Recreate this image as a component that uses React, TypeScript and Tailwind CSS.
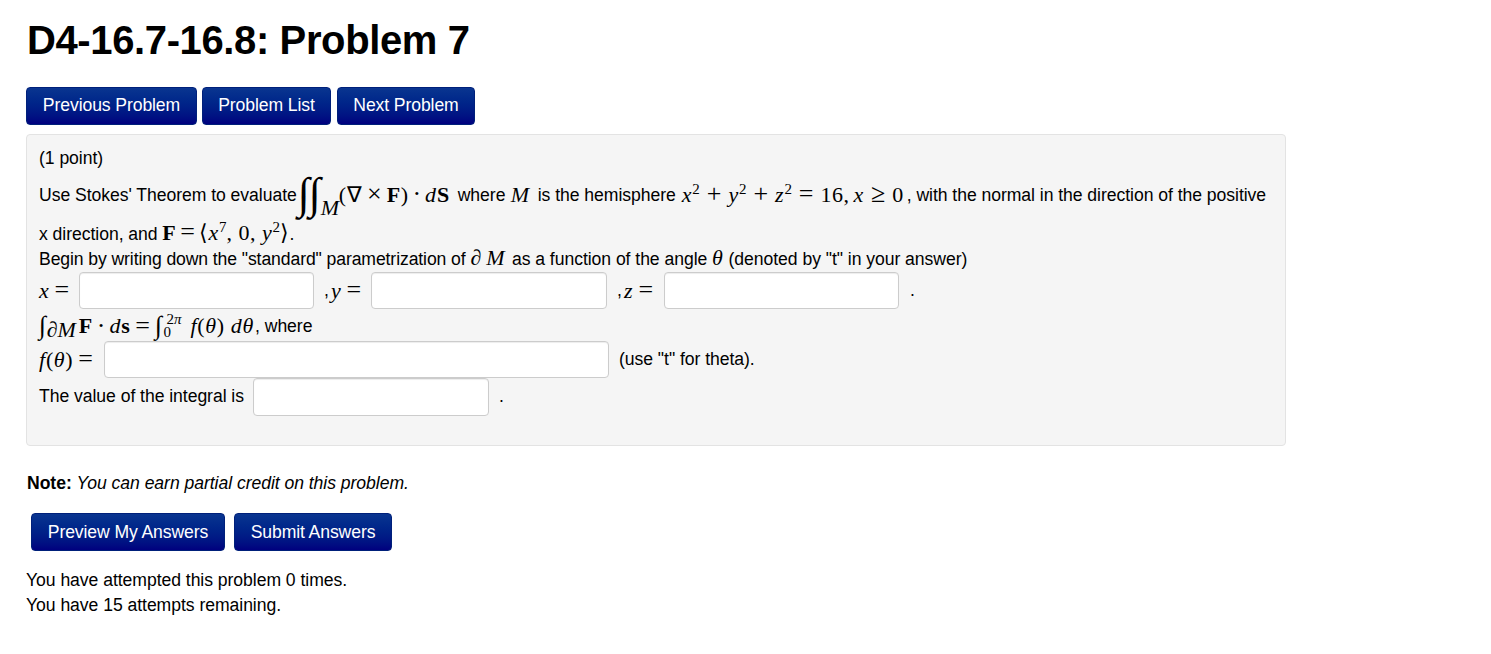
import React from "react";

const btn = "h-[38px] rounded-[4px] border border-[#00207a] bg-gradient-to-b from-[#0a3590] to-[#00007f] text-[17.6px] tracking-[-0.1px] text-white";
const field = "h-[37px] rounded-[4px] border border-[#cccccc] bg-white shadow-[inset_0_1px_1px_rgba(0,0,0,0.075)]";

function I({ children, className = "" }: { children: React.ReactNode; className?: string }) {
  return <span className={"font-['Liberation_Serif',serif] italic text-[22px] leading-none tracking-[0.8px] " + className}>{children}</span>;
}
function R({ children, className = "" }: { children: React.ReactNode; className?: string }) {
  return <span className={"font-['Liberation_Serif',serif] text-[22px] leading-none tracking-[0.5px] " + className}>{children}</span>;
}
function B({ children, className = "" }: { children: React.ReactNode; className?: string }) {
  return <span className={"font-['Liberation_Serif',serif] font-bold text-[22px] leading-none tracking-[0.5px] " + className}>{children}</span>;
}
function Sup({ children }: { children: React.ReactNode }) {
  return <span className="font-['Liberation_Serif',serif] text-[15px] leading-none align-[8px]">{children}</span>;
}
function Op({ children, wide, tight }: { children: React.ReactNode; wide?: boolean; tight?: boolean }) {
  return (
    <span className={"font-['Liberation_Serif',serif] text-[26px] leading-none " + (wide ? "mx-[7px]" : tight ? "mx-[4px]" : "mx-[5px]")}>
      {children}
    </span>
  );
}

export default function App() {
  return (
    <div className="min-h-[654px] bg-white pl-[26px] font-['Liberation_Sans',Arial,sans-serif] text-[17.6px] leading-[25px] tracking-[-0.05px] text-black">
      <h1 className="ml-[1px] pt-[16px] text-[40px] font-bold leading-[48px] tracking-[-0.38px]">D4-16.7-16.8: Problem 7</h1>

      <div className="mt-[23px] flex">
        <button className={btn + " w-[171px] pb-[1px]"}>Previous Problem</button>
        <button className={btn + " ml-[5px] w-[129px] pb-[1px]"}>Problem List</button>
        <button className={btn + " ml-[6px] w-[138px] pb-[1px]"}>Next Problem</button>
      </div>

      <div className="mt-[9px] h-[312px] w-[1260px] rounded-[4px] border border-[#e3e3e3] bg-[#f5f5f5] pl-[12px] pt-[11px]">
        <div className="h-[25px]">(1 point)</div>

        <div className="flex h-[48px] items-center whitespace-nowrap">
          <span>Use Stokes' Theorem to evaluate</span>
          <span className="flex w-[42px] items-start pl-[1px]">
            <span className="font-['Liberation_Serif',serif] text-[44px] leading-[46px] italic">∫</span>
            <span className="ml-[-1px] font-['Liberation_Serif',serif] text-[44px] leading-[46px] italic">∫</span>
            <I className="mt-[26px] text-[14px] leading-[20px]">M</I>
          </span>
          <span className="inline-block w-[119px]">
            <R>(∇</R><Op>×</Op><B>F</B><R>)</R><Op tight>·</Op><I>d</I><B>S</B>
          </span>
          <span className="w-[53px]">where</span>
          <I className="w-[27px]">M</I>
          <span className="w-[144px]">is the hemisphere</span>
          <span className="w-[225px]">
            <I>x</I><Sup>2</Sup><Op wide>+</Op><I>y</I><Sup>2</Sup><Op wide>+</Op><I>z</I><Sup>2</Sup><Op wide>=</Op><R>16,</R><I className="ml-[4px]">x</I><Op wide>≥</Op><R>0</R>
          </span>
          <span>, with the normal in the direction of the positive</span>
        </div>

        <div className="h-[28px] whitespace-nowrap">
          x direction, and <B>F</B><Op tight>=</Op><R>⟨</R><I>x</I><Sup>7</Sup><R>, 0, </R><I>y</I><Sup>2</Sup><R>⟩</R>.
        </div>
        <div className="h-[25px] whitespace-nowrap">
          <span className="tracking-[-0.1px]">Begin by writing down the "standard" parametrization of</span> <R className="tracking-[5px]">∂</R><I className="tracking-[2.5px]">M</I> as a function of the angle <I>θ</I> (denoted by "t" in your answer)
        </div>

        <div className="flex h-[37px] items-center whitespace-nowrap">
          <span className="w-[40px]"><I>x</I><Op>=</Op></span>
          <input className={field + " w-[235px]"} />
          <span className="ml-[10px] w-[7px]">,</span>
          <span className="w-[40px]"><I>y</I><Op>=</Op></span>
          <input className={field + " w-[236px]"} />
          <span className="ml-[10px] w-[7px]">,</span>
          <span className="w-[40px]"><I>z</I><Op>=</Op></span>
          <input className={field + " w-[235px]"} />
          <span className="ml-[11px]">.</span>
        </div>

        <div className="flex h-[31px] items-center whitespace-nowrap pt-[3px]">
          <R className="text-[26px] italic">∫</R>
          <I className="mt-[8px] text-[15px] tracking-normal">∂M</I>
          <B className="ml-[3px]">F</B><Op tight>·</Op><I>d</I><B>s</B><Op>=</Op>
          <R className="text-[26px] italic">∫</R>
          <span className="mr-[9px] flex flex-col font-['Liberation_Serif',serif] text-[15px] leading-[13px]">
            <span className="ml-[4px]">2<i>π</i></span>
            <span className="ml-[1px]">0</span>
          </span>
          <I>f</I><R>(</R><I>θ</I><R>)</R><I className="ml-[6px] mr-[1px]">dθ</I><span>, where</span>
        </div>

        <div className="mt-[1px] flex h-[37px] items-center whitespace-nowrap">
          <span className="w-[65px]"><I>f</I><R>(</R><I>θ</I><R>)</R><Op>=</Op></span>
          <input className={field + " w-[505px]"} />
          <span className="ml-[10px]">(use "t" for theta).</span>
        </div>

        <div className="flex h-[37px] items-center whitespace-nowrap">
          <span className="w-[214px]">The value of the integral is</span>
          <input className={field + " h-[38px] w-[236px]"} />
          <span className="ml-[10px]">.</span>
        </div>
      </div>

      <div className="ml-[1px] mt-[25px]"><b>Note:</b> <i>You can earn partial credit on this problem.</i></div>

      <div className="ml-[5px] mt-[17px] flex">
        <button className={btn + " w-[194px]"}>Preview My Answers</button>
        <button className={btn + " ml-[9px] w-[158px]"}>Submit Answers</button>
      </div>

      <div className="mt-[17px]">You have attempted this problem 0 times.</div>
      <div>You have 15 attempts remaining.</div>
    </div>
  );
}
